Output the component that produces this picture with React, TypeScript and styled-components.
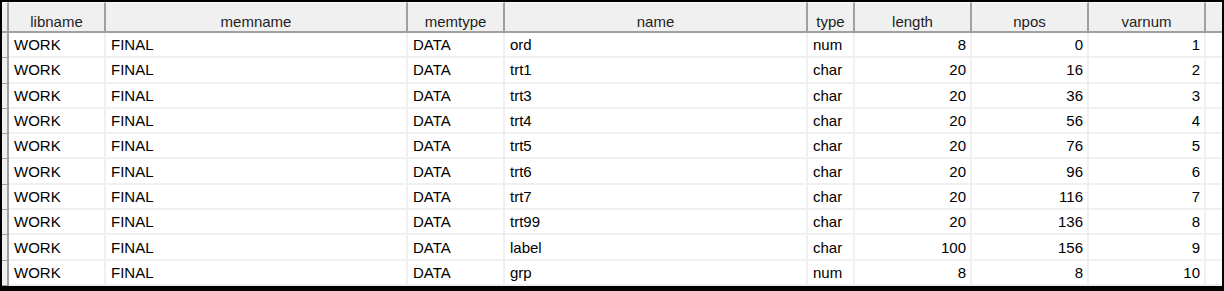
import React from "react";
import styled, { createGlobalStyle } from "styled-components";

const Global = createGlobalStyle`
  html, body { margin: 0; padding: 0; background: #000; }
  body { font-family: "Liberation Sans", Arial, sans-serif; }
`;

const COLS = "7px 97px 302px 97px 303px 47px 117px 117px 117px 1fr";

const Frame = styled.div`
  width: 1224px;
  height: 291px;
  box-sizing: border-box;
  border-style: solid;
  border-color: #000;
  border-width: 2px 2px 5px 2px;
  background: #fff;
  overflow: hidden;
`;

const Grid = styled.div`
  display: grid;
  grid-template-columns: ${COLS};
  grid-template-rows: 31px;
  grid-auto-rows: 25.3px;
`;

const HeadCell = styled.div<{ $last?: boolean }>`
  box-sizing: border-box;
  background: #f0f0f0;
  border-top: 1px solid #fafafa;
  border-bottom: 2px solid #a0a0a0;
  border-right: ${(p) => (p.$last ? "none" : "2px solid #a0a0a0")};
  font-size: 15px;
  color: #1e1e1e;
  display: flex;
  align-items: center;
  justify-content: center;
  padding-top: 8px;
  white-space: nowrap;
  overflow: hidden;
`;

const RowHead = styled.div`
  box-sizing: border-box;
  background: #f0f0f0;
  border-right: 2px solid #a0a0a0;
  border-bottom: 1px solid #a0a0a0;
`;

const Cell = styled.div<{ $num?: boolean }>`
  box-sizing: border-box;
  background: #fff;
  border-right: 2px solid #f0f0f0;
  border-bottom: 2px solid #f0f0f0;
  font-size: 15px;
  color: #000;
  display: flex;
  align-items: center;
  justify-content: ${(p) => (p.$num ? "flex-end" : "flex-start")};
  padding: 0 ${(p) => (p.$num ? "4px" : "0")} 0 ${(p) => (p.$num ? "0" : "5px")};
  white-space: nowrap;
  overflow: hidden;
`;

const Filler = styled.div`
  background: #fff;
  border-bottom: 2px solid #f0f0f0;
`;

const headers = ["libname", "memname", "memtype", "name", "type", "length", "npos", "varnum"];

const rows: [string, string, number, number, number][] = [
  ["ord", "num", 8, 0, 1],
  ["trt1", "char", 20, 16, 2],
  ["trt3", "char", 20, 36, 3],
  ["trt4", "char", 20, 56, 4],
  ["trt5", "char", 20, 76, 5],
  ["trt6", "char", 20, 96, 6],
  ["trt7", "char", 20, 116, 7],
  ["trt99", "char", 20, 136, 8],
  ["label", "char", 100, 156, 9],
  ["grp", "num", 8, 8, 10],
];

export default function App() {
  return (
    <>
      <Global />
      <Frame>
        <Grid>
          <HeadCell />
          {headers.map((h) => (
            <HeadCell key={h}>{h}</HeadCell>
          ))}
          <HeadCell $last />
          {rows.map(([name, type, len, npos, varnum]) => (
            <React.Fragment key={name}>
              <RowHead />
              <Cell>WORK</Cell>
              <Cell>FINAL</Cell>
              <Cell>DATA</Cell>
              <Cell>{name}</Cell>
              <Cell>{type}</Cell>
              <Cell $num>{len}</Cell>
              <Cell $num>{npos}</Cell>
              <Cell $num>{varnum}</Cell>
              <Filler />
            </React.Fragment>
          ))}
        </Grid>
      </Frame>
    </>
  );
}
